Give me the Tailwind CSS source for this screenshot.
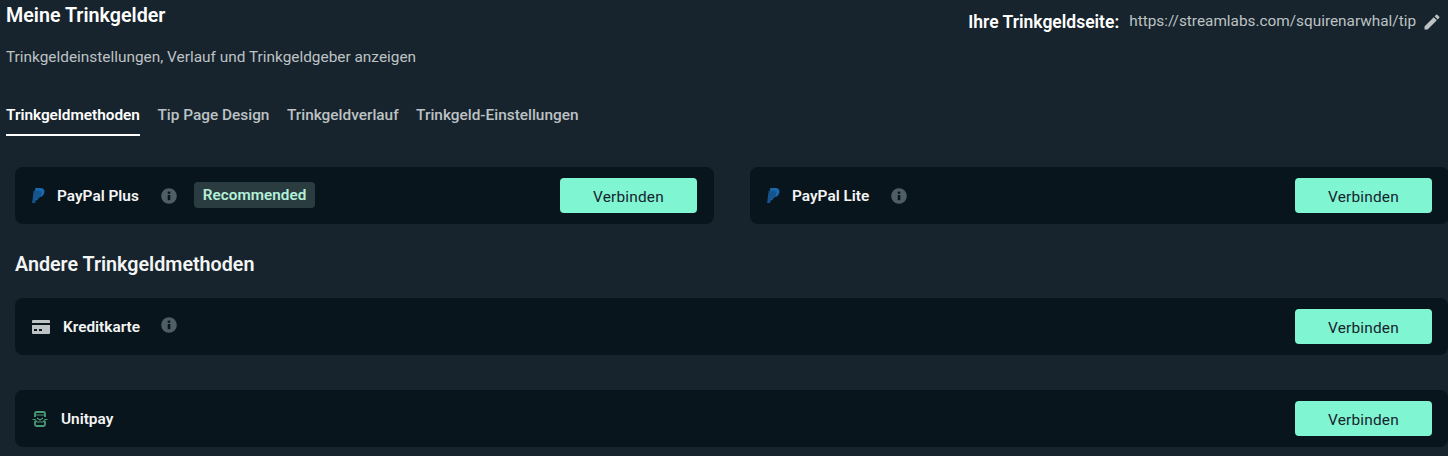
<!DOCTYPE html>
<html lang="de">
<head>
    <meta charset="UTF-8">
    <title>Meine Trinkgelder</title>
    <script src="https://cdn.jsdelivr.net/npm/@tailwindcss/browser@4"></script>
</head>
<body class="bg-[#17242d] font-['Roboto',sans-serif] h-[456px] w-[1448px] overflow-hidden">

    <!-- header -->
    <div class="flex justify-between pl-[6px] pr-[6px]">
        <div>
            <h1 class="text-[19.7px] leading-[32px] font-semibold text-white">Meine Trinkgelder</h1>
            <p class="mt-[15px] text-[15.4px] leading-[20px] text-[#bdc2c4]">Trinkgeldeinstellungen, Verlauf und Trinkgeldgeber anzeigen</p>
        </div>
        <div class="flex items-center h-[24px] mt-[10px]">
            <span class="text-[17.5px] font-semibold text-white">Ihre Trinkgeldseite:</span>
            <span class="ml-[10px] text-[15.35px] text-[#bdc2c4]">https://streamlabs.com/squirenarwhal/tip</span>
            <svg class="ml-[6px]" width="20" height="20" viewBox="0 0 24 24" fill="#bdc2c4"><path d="M3 17.25V21h3.75L17.81 9.94l-3.75-3.75L3 17.25zM20.71 7.04a1 1 0 0 0 0-1.41l-2.34-2.34a1 1 0 0 0-1.41 0l-1.83 1.83 3.75 3.75 1.83-1.83z"/></svg>
        </div>
    </div>

    <!-- tabs -->
    <div class="flex gap-[17.5px] pl-[6px] mt-[35px] text-[15.4px] font-medium text-[#bdc2c4]">
        <div class="h-[34px] leading-[20px] pt-[3px] text-white border-b-2 border-white font-semibold tracking-[-0.03px]">Trinkgeldmethoden</div>
        <div class="leading-[20px] pt-[3px]">Tip Page Design</div>
        <div class="leading-[20px] pt-[3px]">Trinkgeldverlauf</div>
        <div class="leading-[20px] pt-[3px]">Trinkgeld-Einstellungen</div>
    </div>

    <!-- paypal -->
    <div class="flex gap-[36px] pl-[15px] mt-[31px] w-[1500px]">
        <div class="flex items-center w-[699px] h-[57px] rounded-[8px] bg-[#09151d] pl-[17px] pr-[17px]">
            <svg width="13" height="15" viewBox="0 0 24 28"><path d="M6 0h10c5 0 8 3 7 8-1 5-4 9-9 9h-3l-1 6H3z" fill="#1a69ad"/><path d="M3 5h10c4 0 5 3 4 7-1 5-4 8-8 8H7l-1 8H0z" fill="#15548c"/></svg>
            <span class="ml-[12px] pt-[2px] text-[15.4px] font-semibold text-[#f4f5f5]">PayPal Plus</span>
            <svg class="ml-[22px]" width="16" height="16" viewBox="0 0 16 16"><circle cx="8" cy="8" r="7.8" fill="#4f5e65"/><rect x="6.7" y="7" width="2.6" height="5.2" fill="#09151d"/><rect x="6.7" y="3.6" width="2.6" height="2.2" fill="#09151d"/></svg>
            <span class="ml-[17px] h-[26px] -mt-[1px] px-[9px] rounded-[4px] bg-[#2b3c40] text-[15.3px] leading-[26px] font-semibold text-[#b4f0d8]">Recommended</span>
            <button class="ml-auto w-[137px] h-[35px] pt-[4px] rounded-[4px] bg-[#80f5d2] text-[15.4px] tracking-[0.2px] text-[#17242d]">Verbinden</button>
        </div>
        <div class="flex items-center w-[699px] h-[57px] rounded-[8px] bg-[#09151d] pl-[17px] pr-[17px]">
            <svg width="13" height="15" viewBox="0 0 24 28"><path d="M6 0h10c5 0 8 3 7 8-1 5-4 9-9 9h-3l-1 6H3z" fill="#1a69ad"/><path d="M3 5h10c4 0 5 3 4 7-1 5-4 8-8 8H7l-1 8H0z" fill="#15548c"/></svg>
            <span class="ml-[12px] pt-[2px] text-[15.4px] font-semibold text-[#f4f5f5]">PayPal Lite</span>
            <svg class="ml-[22px]" width="16" height="16" viewBox="0 0 16 16"><circle cx="8" cy="8" r="7.8" fill="#4f5e65"/><rect x="6.7" y="7" width="2.6" height="5.2" fill="#09151d"/><rect x="6.7" y="3.6" width="2.6" height="2.2" fill="#09151d"/></svg>
            <button class="ml-auto w-[137px] h-[35px] pt-[4px] rounded-[4px] bg-[#80f5d2] text-[15.4px] tracking-[0.2px] text-[#17242d]">Verbinden</button>
        </div>
    </div>

    <h2 class="pl-[15px] mt-[27px] text-[19.7px] leading-[28px] font-semibold text-[#f4f5f5]">Andere Trinkgeldmethoden</h2>

    <!-- other methods -->
    <div class="flex flex-col gap-[35px] pl-[15px] mt-[19px]">
        <div class="flex items-center w-[1433px] h-[57px] rounded-[8px] bg-[#09151d] pl-[17px] pr-[16px]">
            <svg width="18" height="14" viewBox="0 0 18 14" fill="#bdc2c4"><path d="M1 0h16a1 1 0 0 1 1 1v2H0V1a1 1 0 0 1 1-1z"/><path d="M0 5h18v8a1 1 0 0 1-1 1H1a1 1 0 0 1-1-1zm2 4v2h3V9zm5 0v2h3V9z" fill-rule="evenodd"/></svg>
            <span class="ml-[13px] pt-[2px] text-[15.4px] font-semibold text-[#f4f5f5]">Kreditkarte</span>
            <svg class="ml-[21px] -mt-[3px]" width="16" height="16" viewBox="0 0 16 16"><circle cx="8" cy="8" r="7.8" fill="#4f5e65"/><rect x="6.7" y="7" width="2.6" height="5.2" fill="#09151d"/><rect x="6.7" y="3.6" width="2.6" height="2.2" fill="#09151d"/></svg>
            <button class="ml-auto w-[137px] h-[35px] pt-[4px] rounded-[4px] bg-[#80f5d2] text-[15.4px] tracking-[0.2px] text-[#17242d]">Verbinden</button>
        </div>
        <div class="flex items-center w-[1433px] h-[57px] rounded-[8px] bg-[#09151d] pl-[17px] pr-[16px]">
            <svg width="16" height="16" viewBox="0 0 16 16" fill="none" stroke="#4c9a78" stroke-width="1.8"><path d="M3 6V2.5A1.5 1.5 0 0 1 4.5 1h7A1.5 1.5 0 0 1 13 2.5V6M3 10v3.5A1.5 1.5 0 0 0 4.5 15h7a1.5 1.5 0 0 0 1.5-1.5V10"/><path d="M3 4h10M0.5 8.5h2.5l2 2.5h6l2-2.5h2.5M5 7l3 2 3-2" stroke-width="1.2"/></svg>
            <span class="ml-[13px] pt-[2px] text-[15.4px] font-semibold text-[#f4f5f5]">Unitpay</span>
            <button class="ml-auto w-[137px] h-[35px] pt-[4px] rounded-[4px] bg-[#80f5d2] text-[15.4px] tracking-[0.2px] text-[#17242d]">Verbinden</button>
        </div>
    </div>

</body>
</html>
